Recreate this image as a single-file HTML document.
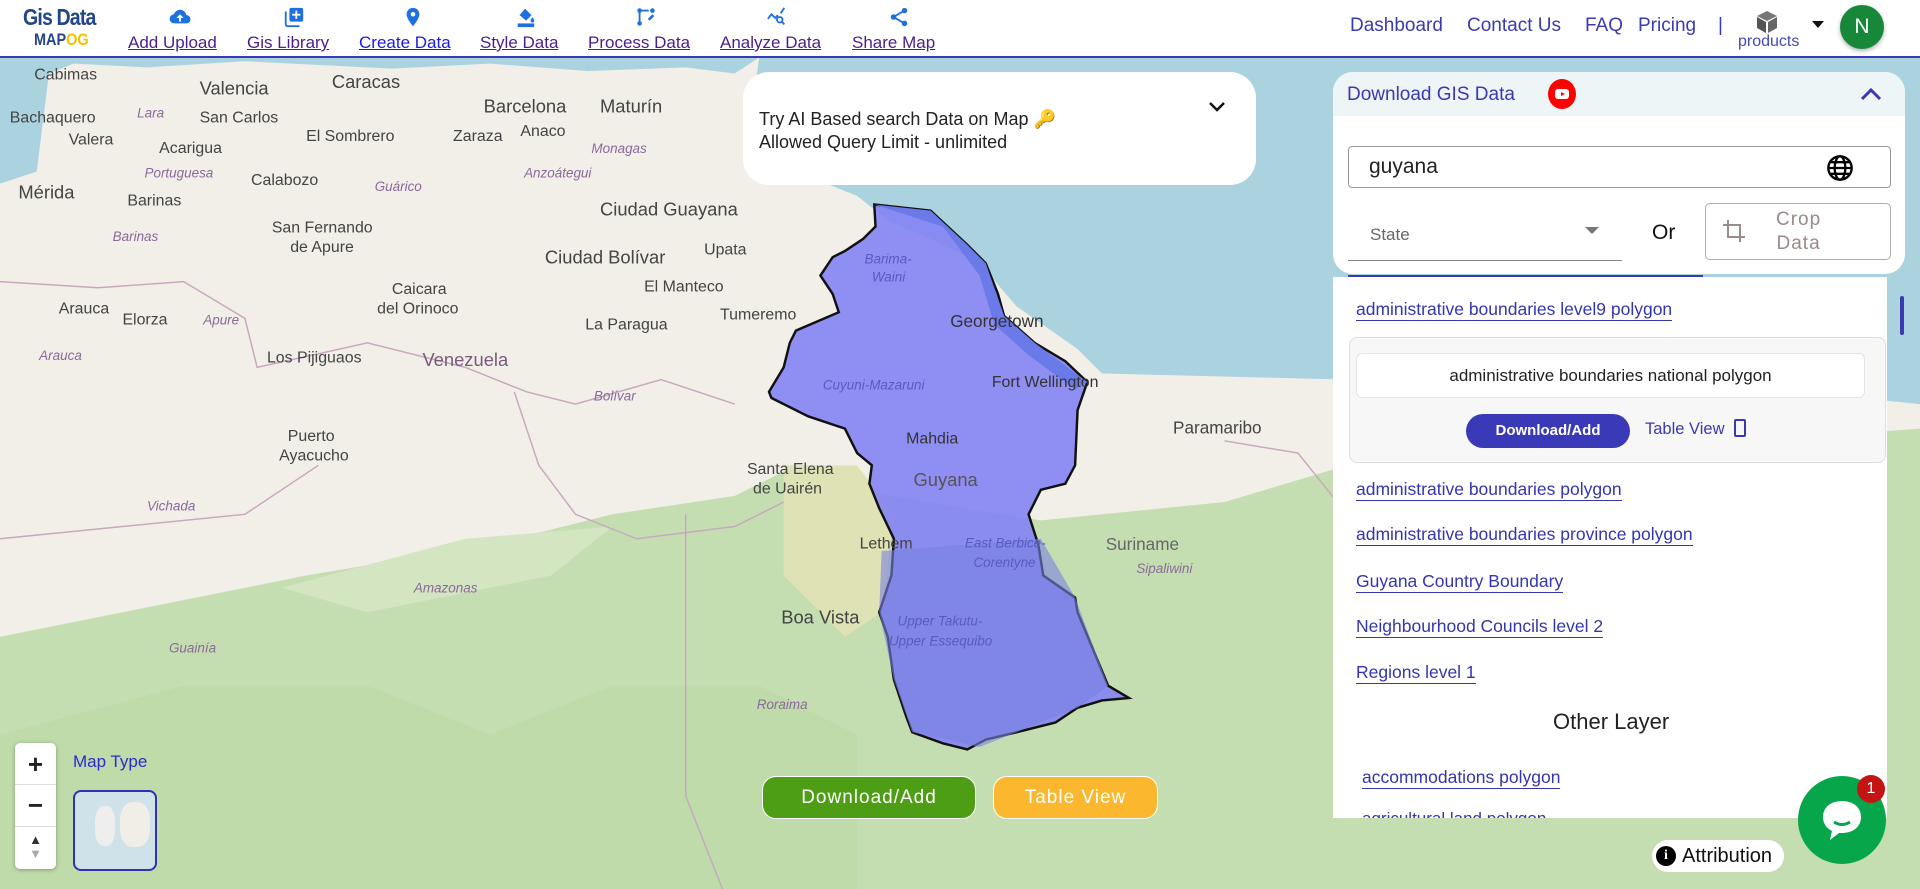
<!DOCTYPE html>
<html><head><meta charset="utf-8">
<style>
*{box-sizing:border-box;margin:0;padding:0}
body{width:1920px;height:889px;overflow:hidden;position:relative;font-family:"Liberation Sans",sans-serif;background:#f2efe9}
#hdr{position:absolute;left:0;top:0;width:1920px;height:58px;background:#fff;border-bottom:2px solid #3a3ab8;z-index:5}
.nav{position:absolute;top:33px;font-size:17px;color:#4b1e8c;text-decoration:underline}
.nav.cur{color:#1a1ae0}
.ic{position:absolute;top:6px;width:22px;height:22px}
.rt{position:absolute;top:15px;font-size:19px;color:#3b3bb0}
#map{position:absolute;left:0;top:0}
.box{position:absolute;background:#fff}
.lnk{position:absolute;left:1356px;font-size:17.5px;color:#3535b0;border-bottom:1.5px solid #3535b0;line-height:22px}
</style></head><body>
<svg id="map" width="1920" height="889" viewBox="0 0 1568 726">
<rect width="1568" height="726" fill="#f2efe9"/>
<path d="M0 47H620L600 60L560 55L480 58L400 52L320 56L200 50L120 55L60 52L40 60L30 140L0 150Z" fill="#aad3df"/>
<path d="M620 47H1568V330L1450 318L1300 312L1100 310L900 305L880 285L830 250L800 215L760 195L725 180L700 160L650 140L610 120Z" fill="#aad3df"/>
<path d="M0 520L100 500L250 470L400 445L500 420L600 405L640 385L700 400L850 425L1000 410L1100 380L1300 370L1568 350V726H0Z" fill="#c5deb1"/>
<path d="M640 380L700 380L730 420L720 500L690 520L640 470Z" fill="#dfe2b5"/>
<path d="M0 600L150 560L300 560L400 600L500 560L620 560L700 600V726H0Z" fill="#b9d8a3" opacity=".6"/>
<path d="M230 480L380 440L500 430L450 470L300 500Z" fill="#d4e5c2"/>
<g fill="none" stroke="#c7a8c0" stroke-width="1.2">
<path d="M0 230L80 235L150 230L200 260L210 300L300 280L380 300L430 320L470 330L540 310L600 330"/>
<path d="M420 320L440 380L470 420L520 440L600 430L640 410"/>
<path d="M560 420L560 470L560 650L590 726"/>
<path d="M1000 360L1060 370L1100 420L1150 470L1180 560L1140 650"/>
<path d="M1350 340L1340 420L1330 520L1350 600"/>
<path d="M0 440L100 430L200 420L260 380"/>
</g>
<path d="M714 167L760 172L790 200L805 215L815 240L820 258L845 280L870 295L888 312L880 335L878 380L870 395L850 400L840 420L848 445L852 470L878 488L880 500L905 560L922 570L900 572L880 578L862 590L830 598L805 604L790 612L770 607L745 598L740 585L730 555L725 520L718 500L728 470L730 440L718 415L710 395L712 380L700 370L690 350L660 340L630 325L628 320L640 300L645 280L650 270L685 255L680 240L670 225L680 210L690 205L705 195L715 185Z" fill="#8585f3" fill-opacity=".92" stroke="#111" stroke-width="2"/>
<path d="M714 167L760 172L790 200L805 215L820 258L845 280L888 312L878 318L840 290L812 265L800 225L770 185Z" fill="#6a7ae8"/>
<path d="M720 450L850 440L878 488L905 560L880 578L800 610L745 598L730 555L718 500Z" fill="#7a82e0" opacity=".6"/>
<g font-family="Liberation Sans" font-size="13" fill="#444">
<text x="28" y="65">Cabimas</text><text x="163" y="77" font-size="15">Valencia</text><text x="271" y="72" font-size="15">Caracas</text>
<text x="395" y="92" font-size="15">Barcelona</text><text x="490" y="92" font-size="15">Maturín</text>
<text x="8" y="100">Bachaquero</text><text x="56" y="118">Valera</text><text x="163" y="100">San Carlos</text><text x="250" y="115">El Sombrero</text>
<text x="130" y="125">Acarigua</text><text x="205" y="151">Calabozo</text><text x="370" y="115">Zaraza</text><text x="425" y="111">Anaco</text>
<text x="15" y="162" font-size="15">Mérida</text><text x="104" y="168">Barinas</text><text x="222" y="190">San Fernando</text><text x="237" y="206">de Apure</text>
<text x="490" y="176" font-size="15">Ciudad Guayana</text><text x="445" y="215" font-size="15">Ciudad Bolívar</text><text x="575" y="208">Upata</text>
<text x="526" y="238">El Manteco</text><text x="320" y="240">Caicara</text><text x="308" y="256">del Orinoco</text>
<text x="48" y="256">Arauca</text><text x="100" y="265">Elorza</text><text x="478" y="269">La Paragua</text><text x="588" y="261">Tumeremo</text>
<text x="218" y="296">Los Pijiguaos</text><text x="345" y="299" font-size="15" fill="#7a5a7a">Venezuela</text>
<text x="235" y="360">Puerto</text><text x="228" y="376">Ayacucho</text><text x="610" y="387">Santa Elena</text><text x="615" y="403">de Uairén</text>
<text x="776" y="267" font-size="14" fill="#333">Georgetown</text><text x="810" y="316" fill="#333">Fort Wellington</text><text x="740" y="362" fill="#333">Mahdia</text>
<text x="746" y="397" font-size="15" fill="#555">Guyana</text><text x="958" y="354" font-size="14">Paramaribo</text>
<text x="903" y="449" font-size="14" fill="#666">Suriname</text><text x="638" y="509" font-size="15">Boa Vista</text><text x="702" y="448">Lethem</text>
</g>
<g font-family="Liberation Sans" font-size="11" font-style="italic" fill="#8a6a9a">
<text x="112" y="96">Lara</text><text x="118" y="145">Portuguesa</text><text x="306" y="156">Guárico</text><text x="483" y="125">Monagas</text>
<text x="428" y="145">Anzoátegui</text><text x="92" y="197">Barinas</text><text x="166" y="265">Apure</text><text x="32" y="294">Arauca</text>
<text x="485" y="327">Bolívar</text><text x="120" y="417">Vichada</text><text x="338" y="484">Amazonas</text><text x="138" y="533">Guainía</text>
<text x="618" y="579">Roraima</text><text x="928" y="468">Sipaliwini</text><text x="706" y="215" fill="#5a5ac0">Barima-</text><text x="712" y="230" fill="#5a5ac0">Waini</text>
<text x="672" y="318" fill="#5a5ac0">Cuyuni-Mazaruni</text><text x="788" y="447" fill="#5a5ac0">East Berbice-</text><text x="795" y="463" fill="#5a5ac0">Corentyne</text>
<text x="733" y="511" fill="#5a5ac0">Upper Takutu-</text><text x="726" y="527" fill="#5a5ac0">Upper Essequibo</text>
</g>
</svg>

<div id="hdr">
 <div style="position:absolute;left:23px;top:4px;font:bold 23px 'Liberation Sans';color:#23468a;letter-spacing:-1px;transform:scaleX(.85);transform-origin:left">Gis Data</div>
 <div style="position:absolute;left:34px;top:30px;font:bold 17px 'Liberation Sans';color:#23468a;transform:scaleX(.85);transform-origin:left">MAP<span style="color:#f2c200">OG</span></div>
 <svg class="ic" style="left:169px" viewBox="0 0 24 24"><path d="M19 10a7 7 0 0 0-13.6-1A5 5 0 0 0 6 19h13a4.5 4.5 0 0 0 0-9z" fill="#1e6fe0"/><path d="M12 9l-4 4h3v4h2v-4h3z" fill="#fff"/></svg>
 <svg class="ic" style="left:283px" viewBox="0 0 24 24"><rect x="7" y="2" width="15" height="15" rx="2" fill="#1e6fe0"/><path d="M3 6v14a2 2 0 0 0 2 2h13" stroke="#1e6fe0" stroke-width="2" fill="none"/><path d="M14.5 5v9M10 9.5h9" stroke="#fff" stroke-width="2"/></svg>
 <svg class="ic" style="left:402px" viewBox="0 0 24 24"><path d="M12 2a7 7 0 0 0-7 7c0 5 7 13 7 13s7-8 7-13a7 7 0 0 0-7-7z" fill="#1e6fe0"/><circle cx="12" cy="9" r="2.5" fill="#fff"/></svg>
 <svg class="ic" style="left:515px" viewBox="0 0 24 24"><path d="M5 10l6-7 7 7-6 6z" fill="#1e6fe0"/><path d="M19 12s-2 3-2 4a2 2 0 0 0 4 0c0-1-2-4-2-4z" fill="#1e6fe0"/><rect x="3" y="19" width="18" height="4" fill="#1e6fe0"/></svg>
 <svg class="ic" style="left:635px" viewBox="0 0 24 24"><g fill="#1e6fe0"><circle cx="5" cy="5" r="2.5"/><circle cx="19" cy="5" r="2.5"/><circle cx="5" cy="19" r="2.5"/><rect x="4" y="7" width="2" height="10"/><path d="M7 4h8v2H7z"/><path d="M14 14l5-5 2 2-5 5z"/></g></svg>
 <svg class="ic" style="left:766px" viewBox="0 0 24 24"><g stroke="#1e6fe0" stroke-width="2" fill="none"><path d="M2 14l4-5 4 4 3-3"/><circle cx="15" cy="15" r="3"/><path d="M17 17l3 3M16 8l4-6"/></g></svg>
 <svg class="ic" style="left:888px" viewBox="0 0 24 24"><g fill="#1e6fe0"><circle cx="18" cy="5" r="3"/><circle cx="6" cy="12" r="3"/><circle cx="18" cy="19" r="3"/></g><path d="M18 5L6 12l12 7" stroke="#1e6fe0" stroke-width="2" fill="none"/></svg>
 <a class="nav" style="left:128px">Add Upload</a>
 <a class="nav" style="left:247px">Gis Library</a>
 <a class="nav cur" style="left:359px">Create Data</a>
 <a class="nav" style="left:480px">Style Data</a>
 <a class="nav" style="left:588px">Process Data</a>
 <a class="nav" style="left:720px">Analyze Data</a>
 <a class="nav" style="left:852px">Share Map</a>
 <div class="rt" style="left:1350px">Dashboard</div>
 <div class="rt" style="left:1467px">Contact Us</div>
 <div class="rt" style="left:1585px">FAQ</div>
 <div class="rt" style="left:1638px">Pricing</div>
 <div class="rt" style="left:1718px">|</div>
 <svg style="position:absolute;left:1756px;top:10px" width="22" height="24" viewBox="0 0 22 24"><path d="M11 1l10 5-10 5L1 6z" fill="#777"/><path d="M1 7l9 5v11l-9-5z" fill="#555"/><path d="M21 7l-9 5v11l9-5z" fill="#666"/></svg>
 <div style="position:absolute;left:1738px;top:33px;font-size:16px;color:#4848b8">products</div>
 <div style="position:absolute;left:1812px;top:21px;border:6px solid transparent;border-top:7px solid #111;border-bottom:0"></div>
 <div style="position:absolute;left:1840px;top:5px;width:44px;height:44px;border-radius:50%;background:#17883a;color:#fff;font-size:21px;text-align:center;line-height:44px;box-shadow:0 2px 4px rgba(0,0,0,.3)">N</div>
</div>

<div class="box" style="left:743px;top:72px;width:513px;height:113px;border-radius:26px">
 <div style="position:absolute;left:16px;top:36px;font-size:18px;color:#222;line-height:23px">Try AI Based search Data on Map <span style="color:#e8c840">🔑</span><br>Allowed Query Limit - unlimited</div>
 <svg style="position:absolute;left:465px;top:28px" width="18" height="14" viewBox="0 0 18 14"><path d="M2 3l7 7 7-7" stroke="#111" stroke-width="2.5" fill="none"/></svg>
</div>

<div class="box" style="left:1333px;top:72px;width:572px;height:202px;border-radius:20px;overflow:hidden">
 <div style="height:44px;background:#edf5f7"></div>
 <div style="position:absolute;left:14px;top:12px;font-size:19px;color:#3a3ab0">Download GIS Data</div>
 <div style="position:absolute;left:215px;top:7px;width:28px;height:30px;border-radius:50%;background:#f00"><div style="position:absolute;left:7px;top:10px;width:14px;height:10px;background:#fff;border-radius:3px"></div><div style="position:absolute;left:13px;top:13px;border:2px solid transparent;border-left:4px solid #f00"></div></div>
 <svg style="position:absolute;left:526px;top:14px" width="24" height="16" viewBox="0 0 24 16"><path d="M3 13L12 4l9 9" stroke="#3a3ab0" stroke-width="3" fill="none"/></svg>
 <div style="position:absolute;left:15px;top:74px;width:543px;height:42px;border:1px solid #999;border-radius:4px;font-size:21px;color:#222;padding:8px 0 0 20px">guyana</div>
 <svg style="position:absolute;left:493px;top:82px" width="28" height="28" viewBox="0 0 24 24"><g stroke="#000" stroke-width="2" fill="none"><circle cx="12" cy="12" r="10"/><ellipse cx="12" cy="12" rx="4.5" ry="10"/><path d="M2 12h20M4 7h16M4 17h16"/></g></svg>
 <div style="position:absolute;left:15px;top:139px;width:274px;height:50px;border-bottom:1px solid #888;font-size:17px;color:#666;padding:14px 0 0 22px">State</div>
 <div style="position:absolute;left:252px;top:155px;border:7px solid transparent;border-top:7px solid #777;border-bottom:0"></div>
 <div style="position:absolute;left:319px;top:149px;font-size:21px;color:#111">Or</div>
 <div style="position:absolute;left:372px;top:131px;width:186px;height:57px;border:1px solid #b8a8a8;border-radius:5px"></div>
 <svg style="position:absolute;left:389px;top:147px" width="24" height="24" viewBox="0 0 24 24"><path d="M6 1v17h17M1 6h17v17" stroke="#9a8a8a" stroke-width="2" fill="none"/></svg>
 <div style="position:absolute;left:443px;top:136px;font-size:19px;color:#9a8a8a;line-height:24px;text-align:center;letter-spacing:1px">Crop<br>Data</div>
</div>
<div style="position:absolute;left:1348px;top:275px;width:355px;height:2px;background:#3a3ab0"></div>
<div class="box" style="left:1333px;top:277px;width:554px;height:541px">
</div>
<div style="position:absolute;left:1900px;top:296px;width:4px;height:39px;background:#3a3ab0;border-radius:2px"></div>
<div class="lnk" style="top:298px">administrative boundaries level9 polygon</div>
<div style="position:absolute;left:1349px;top:337px;width:537px;height:126px;border:1px solid #ddd;border-radius:8px;background:#f7f7f7"></div>
<div style="position:absolute;left:1356px;top:353px;width:509px;height:45px;border:1px solid #e4e4e4;border-radius:6px;background:#fff;font-size:17px;color:#222;text-align:center;line-height:43px">administrative boundaries national polygon</div>
<div style="position:absolute;left:1466px;top:414px;width:164px;height:34px;border-radius:17px;background:#3a3ab8;color:#fff;font-weight:bold;font-size:15px;text-align:center;line-height:34px">Download/Add</div>
<div style="position:absolute;left:1645px;top:420px;font-size:16.5px;color:#3a3ab0">Table View</div>
<div style="position:absolute;left:1734px;top:419px;width:12px;height:18px;border:2px solid #3a3ab0;border-radius:2px"></div>
<div class="lnk" style="top:478px">administrative boundaries polygon</div>
<div class="lnk" style="top:523px">administrative boundaries province polygon</div>
<div class="lnk" style="top:570px">Guyana Country Boundary</div>
<div class="lnk" style="top:615px">Neighbourhood Councils level 2</div>
<div class="lnk" style="top:661px">Regions level 1</div>
<div style="position:absolute;left:1553px;top:709px;font-size:22px;color:#222">Other Layer</div>
<div class="lnk" style="top:766px;left:1362px">accommodations polygon</div>
<div style="position:absolute;left:1362px;top:808px;width:220px;height:10px;overflow:hidden;font-size:17px;color:#3535b0;line-height:22px">agricultural land polygon</div>

<div style="position:absolute;left:1652px;top:840px;width:132px;height:32px;border-radius:16px;background:#fff;font-size:20px;color:#111;line-height:32px;padding-left:30px">Attribution</div>
<div style="position:absolute;left:1656px;top:846px;width:20px;height:20px;border-radius:50%;background:#000;color:#fff;font:bold 14px 'Liberation Serif';text-align:center;line-height:20px">i</div>

<div style="position:absolute;left:1798px;top:776px;width:88px;height:88px;border-radius:50%;background:#08a64a"></div>
<svg style="position:absolute;left:1816px;top:797px" width="52" height="48" viewBox="0 0 52 48"><path d="M26 4C14 4 7 11 7 20c0 6 3 11 9 14l-2 9 9-7c1 0 2 0 3 0 12 0 19-7 19-16S38 4 26 4z" fill="#fff"/><path d="M18 25q8 5 16 0" stroke="#08a64a" stroke-width="3" fill="none"/></svg>
<div style="position:absolute;left:1857px;top:775px;width:28px;height:28px;border-radius:50%;background:#c41414;color:#fff;font-size:16px;text-align:center;line-height:28px">1</div>

<div style="position:absolute;left:762px;top:776px;width:214px;height:43px;border-radius:14px;background:#4d9e15;border:1px solid #fff;color:#fff;font-size:19px;text-align:center;line-height:41px;letter-spacing:1px">Download/Add</div>
<div style="position:absolute;left:993px;top:776px;width:165px;height:43px;border-radius:14px;background:#fbb72e;border:1px solid #fff;color:#fff;font-size:19px;text-align:center;line-height:41px;letter-spacing:1px">Table View</div>

<div style="position:absolute;left:15px;top:743px;width:41px;height:126px;background:#fff;border-radius:5px;box-shadow:0 1px 4px rgba(0,0,0,.3)">
 <div style="height:42px;border-bottom:1px solid #ddd;font:bold 26px 'Liberation Sans';text-align:center;line-height:42px;color:#222">+</div>
 <div style="height:42px;border-bottom:1px solid #ddd;font:bold 26px 'Liberation Sans';text-align:center;line-height:40px;color:#222">−</div>
 <div style="font-size:13px;text-align:center;line-height:14px;padding-top:6px;color:#333">▲<br><span style="color:#aaa">▼</span></div>
</div>
<div style="position:absolute;left:73px;top:752px;font-size:17px;color:#2a2ad0">Map Type</div>
<div style="position:absolute;left:73px;top:790px;width:84px;height:81px;border:2px solid #3030b0;border-radius:8px;background:#cfe2ea;overflow:hidden">
 <div style="position:absolute;left:20px;top:14px;width:20px;height:40px;background:#eee;border-radius:40%"></div>
 <div style="position:absolute;left:45px;top:10px;width:30px;height:45px;background:#f0eee6;border-radius:40%"></div>
</div>
</body></html>
